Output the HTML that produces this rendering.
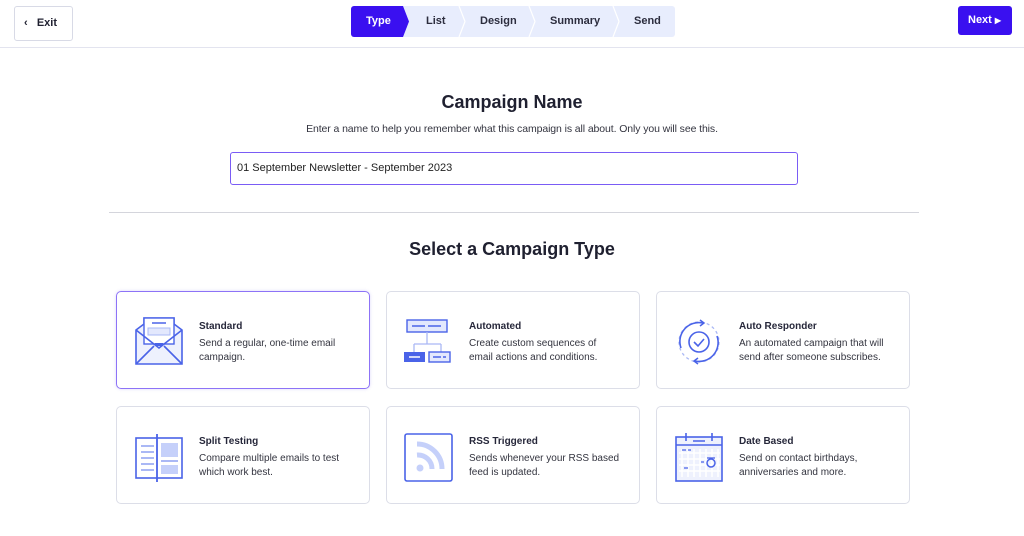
<!DOCTYPE html>
<html><head><meta charset="utf-8"><style>
*{margin:0;padding:0;box-sizing:border-box}
body{width:1024px;height:536px;background:#fff;font-family:"Liberation Sans",sans-serif;color:#1f2030;position:relative;overflow:hidden}
.abs{position:absolute}
.hdr{left:0;top:0;width:1024px;height:48px;border-bottom:1px solid #e3e4ef}
.exit{left:14px;top:6px;width:59px;height:35px;border:1px solid #d8dae6;border-radius:3px;font-size:11px;font-weight:bold;line-height:33px;padding-left:9px}
.steps{left:351px;top:6px;width:324px;height:31px;background:#e8edfd;border-radius:3px;overflow:hidden}
.st{position:absolute;top:0;height:31px;line-height:31px;font-size:11px;font-weight:bold;color:#2c2d3e}
.next{left:958px;top:6px;width:54px;height:29px;background:#3a10f0;border-radius:3px;color:#fff;font-size:11px;font-weight:bold;line-height:29px;padding-left:10px}
h1{position:absolute;width:1024px;text-align:center;font-size:18px;font-weight:bold;color:#1f2030}
.sub{left:0;top:123px;width:1024px;text-align:center;font-size:10.5px;color:#33343f;letter-spacing:-0.1px}
.inp{left:230px;top:152px;width:568px;height:33px;border:1.5px solid #7a5cf5;border-radius:3px;font-size:11px;line-height:31px;padding-left:6px;color:#222}
.hr{left:109px;top:212px;width:810px;height:1px;background:#d4d5dc}
.card{position:absolute;width:254px;height:98px;border:1px solid #dcdee8;border-radius:5px}
.card.sel{border:1.3px solid #8d73f7;box-shadow:0 0 3px rgba(120,100,240,.25)}
.card svg{position:absolute;left:17px;top:24px}
.card .t{position:absolute;left:82px;top:29px;font-size:10px;font-weight:bold;color:#26273a}
.card .d{position:absolute;left:82px;top:45px;font-size:10px;line-height:14px;color:#33343f;width:152px}
</style></head><body>
<div class="abs hdr"></div>
<div class="abs exit">‹&nbsp;&nbsp; Exit</div>
<div class="abs steps">
<svg class="abs" style="left:0;top:0" width="324" height="31">
<path d="M0 0H52L58 15.5L52 31H0Z" fill="#3a10f0"/>
<path d="M108 0L114 15.5L108 31M178 0L184 15.5L178 31M262 0L268 15.5L262 31" stroke="#fff" fill="none" stroke-width="1.2"/>
</svg>
<div class="st" style="left:15px;color:#fff">Type</div>
<div class="st" style="left:75px">List</div>
<div class="st" style="left:129px">Design</div>
<div class="st" style="left:199px">Summary</div>
<div class="st" style="left:283px">Send</div>
</div>
<div class="abs next">Next <span style="font-size:8px">▶</span></div>
<h1 style="top:92px">Campaign Name</h1>
<div class="abs sub">Enter a name to help you remember what this campaign is all about. Only you will see this.</div>
<div class="abs inp">01 September Newsletter - September 2023</div>
<div class="abs hr"></div>
<h1 style="top:239px">Select a Campaign Type</h1>

<div class="card sel" style="left:116px;top:291px">
<svg width="50" height="52" viewBox="0 0 50 52"><path d="M2 14L10 8V2H40V8L48 14V48H2Z" fill="#eef1fd" stroke="#4a63e8" stroke-width="1.6"/><rect x="10" y="2" width="30" height="26" fill="#fff" stroke="#4a63e8" stroke-width="1.4"/><path d="M18 7h14" stroke="#4a63e8" stroke-width="1.5"/><rect x="14" y="12" width="22" height="7" fill="#e3e8fd" stroke="#aab8f5"/><rect x="21" y="27" width="8" height="3" fill="#4a63e8"/><path d="M2 14L25 32L48 14M2 48L20 30M48 48L30 30" fill="none" stroke="#4a63e8" stroke-width="1.6"/></svg>
<div class="t">Standard</div><div class="d">Send a regular, one-time email campaign.</div></div>

<div class="card" style="left:386px;top:291px">
<svg width="50" height="52" viewBox="0 0 50 52"><rect x="3" y="4" width="40" height="12" fill="#e3e8fd" stroke="#4a63e8" stroke-width="1.4"/><path d="M8 10h13M24 10h13" stroke="#4a63e8" stroke-width="1.5"/><path d="M23 16v12M10 28h27M10 28v8M37 28v8" stroke="#aab8f5" stroke-width="1.3" fill="none"/><rect x="0" y="36" width="21" height="10" fill="#4a63e8"/><path d="M5 41h11" stroke="#fff" stroke-width="1.5"/><rect x="25" y="36" width="21" height="10" fill="#e3e8fd" stroke="#4a63e8" stroke-width="1.4"/><path d="M29 41h8M39 41h3" stroke="#4a63e8" stroke-width="1.5"/></svg>
<div class="t">Automated</div><div class="d">Create custom sequences of email actions and conditions.</div></div>

<div class="card" style="left:656px;top:291px">
<svg width="50" height="52" viewBox="0 0 50 52"><circle cx="25" cy="26" r="20" fill="none" stroke="#aab8f5" stroke-width="1.3" stroke-dasharray="3 3"/><path d="M7 32A19 19 0 0 1 29 7M43 20A19 19 0 0 1 21 45" fill="none" stroke="#4a63e8" stroke-width="1.6"/><path d="M26 4l4 3-4 3M24 42l-4 3 4 3" fill="none" stroke="#4a63e8" stroke-width="1.5"/><circle cx="25" cy="26" r="10" fill="none" stroke="#4a63e8" stroke-width="1.6"/><path d="M20 26l4 4 6-7" fill="none" stroke="#4a63e8" stroke-width="1.6"/></svg>
<div class="t">Auto Responder</div><div class="d" style="width:160px">An automated campaign that will send after someone subscribes.</div></div>

<div class="card" style="left:116px;top:406px">
<svg width="50" height="52" viewBox="0 0 50 52"><rect x="2" y="7" width="46" height="40" fill="#fff" stroke="#4a63e8" stroke-width="1.6"/><path d="M23 3v48" stroke="#4a63e8" stroke-width="1.8"/><path d="M7 15h13M7 21h13M7 27h13M7 33h13M7 39h13" stroke="#aab8f5" stroke-width="2"/><rect x="27" y="12" width="17" height="14" fill="#c5d0fa"/><path d="M27 30h17" stroke="#aab8f5" stroke-width="2"/><rect x="27" y="34" width="17" height="9" fill="#c5d0fa"/></svg>
<div class="t">Split Testing</div><div class="d">Compare multiple emails to test which work best.</div></div>

<div class="card" style="left:386px;top:406px">
<svg width="50" height="52" viewBox="0 0 50 52"><rect x="1" y="3" width="47" height="47" rx="2" fill="#fff" stroke="#4a63e8" stroke-width="1.6"/><circle cx="16" cy="37" r="3.5" fill="#c5d0fa"/><path d="M13 24A14 14 0 0 1 28 38M13 13A25 25 0 0 1 38 38" fill="none" stroke="#c5d0fa" stroke-width="5"/></svg>
<div class="t">RSS Triggered</div><div class="d">Sends whenever your RSS based feed is updated.</div></div>

<div class="card" style="left:656px;top:406px">
<svg width="50" height="52" viewBox="0 0 50 52"><rect x="2" y="6" width="46" height="44" fill="#eef1fd" stroke="#4a63e8" stroke-width="1.6"/><path d="M2 14h46" stroke="#4a63e8" stroke-width="1.6"/><path d="M12 2v8M38 2v8M19 10h12" stroke="#4a63e8" stroke-width="1.6"/><path d="M8 18v28M14 18v28M20 18v28M26 18v28M32 18v28M38 18v28M44 18v28M5 22h41M5 28h41M5 34h41M5 40h41" stroke="#fff" stroke-width="1.5"/><path d="M8 19h4M14 19h3M10 37h4M27 31h3" stroke="#4a63e8" stroke-width="1.3"/><circle cx="37" cy="32" r="4" fill="none" stroke="#4a63e8" stroke-width="1.5"/><path d="M33 27h8" stroke="#4a63e8" stroke-width="1.3"/></svg>
<div class="t">Date Based</div><div class="d">Send on contact birthdays, anniversaries and more.</div></div>
</body></html>
